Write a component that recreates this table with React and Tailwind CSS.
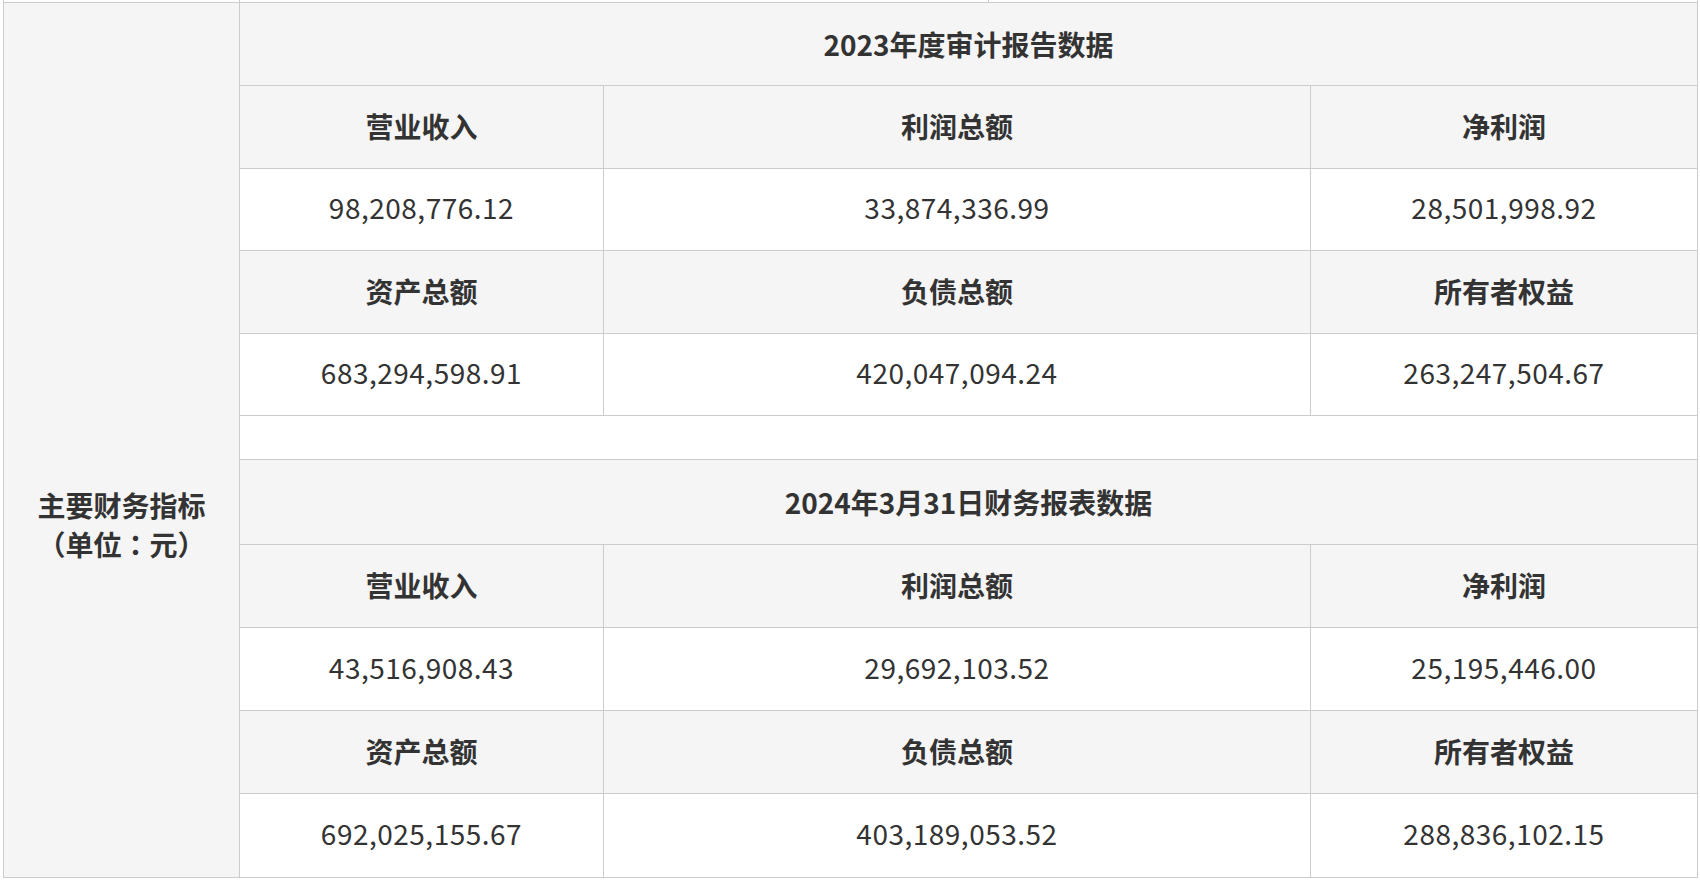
import React from "react";

function Row({ cells, head, h }) {
  return (
    <div className={`flex border-b border-[#cccccc] ${h}`}>
      {cells.map((c, i) => (
        <div
          key={i}
          className={`flex items-center justify-center ${
            i === 0 ? "w-[364px] border-r border-[#cccccc]" : i === 1 ? "w-[707px] border-r border-[#cccccc]" : "flex-1"
          } ${head ? "bg-[#f5f5f5] font-bold pb-[2px]" : "bg-white pb-[5px] tracking-[0.5px]"}`}
        >
          {c}
        </div>
      ))}
    </div>
  );
}

export default function App() {
  return (
    <div
      className="w-[1700px] h-[884px] bg-white text-[#333333] text-[28px] overflow-hidden"
      style={{ fontFamily: '"Noto Sans CJK SC", "Noto Sans", sans-serif' }}
    >
      <div className="pl-[3px]">
        <div className="flex h-[2px] w-[1695px] border-l border-r border-[#cccccc]">
          <div className="w-[236px] border-r border-[#cccccc]" />
          <div className="w-[749px] border-r border-[#cccccc]" />
          <div className="flex-1" />
        </div>
        <div className="flex w-[1695px] border border-[#cccccc]">
          <div className="w-[236px] shrink-0 border-r border-[#cccccc] bg-[#f5f5f5] flex flex-col items-center justify-center pt-[170px] font-bold leading-[39px]">
            <div>主要财务指标</div>
            <div style={{ fontFamily: '"Noto Sans CJK JP", "Noto Sans CJK SC", sans-serif' }}>（单位：元）</div>
          </div>
          <div className="flex-1 flex flex-col">
            <div className="h-[83px] border-b border-[#cccccc] bg-[#f5f5f5] flex items-center justify-center font-bold">
              2023年度审计报告数据
            </div>
            <Row head h="h-[83px]" cells={["营业收入", "利润总额", "净利润"]} />
            <Row h="h-[82px]" cells={["98,208,776.12", "33,874,336.99", "28,501,998.92"]} />
            <Row head h="h-[83px]" cells={["资产总额", "负债总额", "所有者权益"]} />
            <Row h="h-[82px]" cells={["683,294,598.91", "420,047,094.24", "263,247,504.67"]} />
            <div className="h-[44px] border-b border-[#cccccc] bg-white" />
            <div className="h-[85px] border-b border-[#cccccc] bg-[#f5f5f5] flex items-center justify-center font-bold">
              2024年3月31日财务报表数据
            </div>
            <Row head h="h-[83px]" cells={["营业收入", "利润总额", "净利润"]} />
            <Row h="h-[83px]" cells={["43,516,908.43", "29,692,103.52", "25,195,446.00"]} />
            <Row head h="h-[83px]" cells={["资产总额", "负债总额", "所有者权益"]} />
            <div className="flex h-[83px] tracking-[0.5px]">
              <div className="w-[364px] border-r border-[#cccccc] flex items-center justify-center bg-white pb-[5px]">692,025,155.67</div>
              <div className="w-[707px] border-r border-[#cccccc] flex items-center justify-center bg-white pb-[5px]">403,189,053.52</div>
              <div className="flex-1 flex items-center justify-center bg-white pb-[5px]">288,836,102.15</div>
            </div>
          </div>
        </div>
      </div>
    </div>
  );
}
